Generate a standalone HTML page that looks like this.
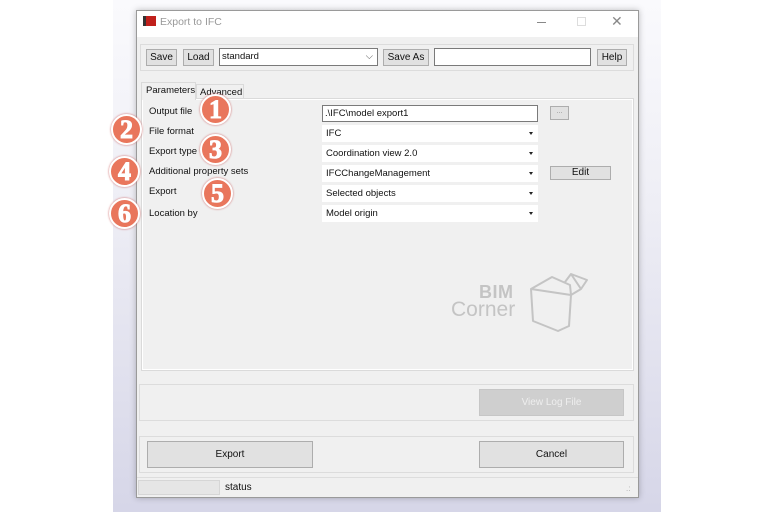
<!DOCTYPE html>
<html><head><meta charset="utf-8"><style>
*{box-sizing:border-box;margin:0;padding:0}
body{width:768px;height:512px;position:relative;overflow:hidden;background:#fff;font-family:"Liberation Sans",sans-serif;font-size:9.5px;color:#111}
.a{position:absolute}
.bg{left:113px;top:0;width:548px;height:512px;background:linear-gradient(#fafafd,#eeeef5 40%,#d6d6e8)}
.win{left:136px;top:10px;width:503px;height:488px;background:#f0f0f0;border:1px solid #9a9a9a;box-shadow:0 0 6px rgba(0,0,0,.25)}
.btn{position:absolute;background:#e1e1e1;border:1px solid #adadad;text-align:center;line-height:15px;font-size:10px}
.grp{position:absolute;border:1px solid #dcdcdc}
.lbl{position:absolute;left:149px;font-size:9.5px}
.dd{position:absolute;left:322px;width:216px;height:17px;background:#fff;font-size:9.5px;line-height:17px;padding-left:4px}
.dd:after{content:"";position:absolute;right:5px;top:7px;border-left:2.5px solid transparent;border-right:2.5px solid transparent;border-top:3px solid #222}
.c{position:absolute;width:31px;height:31px;border-radius:50%;background:#e9765c;border:2px solid #fff;box-shadow:0 0 2px #c66;color:#fff;font:900 26px/27px "Liberation Serif",serif;text-align:center;-webkit-text-stroke:1px #fff;text-shadow:0 0 1px #933}
</style></head><body>
<div class="a bg"></div>
<div class="a win"></div>
<div class="a" style="left:137px;top:11px;width:501px;height:26px;background:#fff"></div>
<div class="a" style="left:143px;top:16px;width:13px;height:10px;background:#c0201c;border-left:3px solid #333"></div>
<div class="a" style="left:160px;top:16px;color:#999;font-size:10.5px">Export to IFC</div>
<div class="a" style="left:537px;top:22px;width:9px;height:1px;background:#888"></div>
<div class="a" style="left:577px;top:17px;width:9px;height:9px;border:1px solid #ddd"></div>
<div class="a" style="left:611px;top:13px;color:#888;font-size:14px">✕</div>

<div class="grp" style="left:140px;top:44px;width:494px;height:27px"></div>
<div class="btn" style="left:146px;top:49px;width:31px;height:17px">Save</div>
<div class="btn" style="left:183px;top:49px;width:31px;height:17px">Load</div>
<div class="a" style="left:219px;top:48px;width:159px;height:18px;background:#fff;border:1px solid #7a7a7a;padding-left:2px;line-height:15px">standard<span style="position:absolute;right:4px;top:0;color:#666">⌵</span></div>
<div class="btn" style="left:383px;top:49px;width:46px;height:17px">Save As</div>
<div class="a" style="left:434px;top:48px;width:157px;height:18px;background:#fff;border:1px solid #7a7a7a"></div>
<div class="btn" style="left:597px;top:49px;width:30px;height:17px">Help</div>

<div class="a" style="left:141px;top:98px;width:493px;height:273px;border:1px solid #dadada;background:#f0f0f0"></div>
<div class="a" style="left:142px;top:99px;width:491px;height:271px;border:1px solid #fff"></div>
<div class="a" style="left:141px;top:82px;width:55px;height:18px;background:#f0f0f0;border:1px solid #dadada;border-bottom:none;padding:2px 0 0 4px">Parameters</div>
<div class="a" style="left:196px;top:84px;width:48px;height:15px;border:1px solid #dadada;border-bottom:none;padding:2px 0 0 3px">Advanced</div>

<div class="lbl" style="top:106px">Output file</div>
<div class="lbl" style="top:126px">File format</div>
<div class="lbl" style="top:146px">Export type</div>
<div class="lbl" style="top:166px">Additional property sets</div>
<div class="lbl" style="top:186px">Export</div>
<div class="lbl" style="top:208px">Location by</div>

<div class="a" style="left:322px;top:105px;width:216px;height:17px;background:#fff;border:1px solid #7a7a7a;line-height:15px;padding-left:2px">.\IFC\model export1</div>
<div class="btn" style="left:550px;top:106px;width:19px;height:14px;font-size:7px;line-height:10px;color:#888">...</div>
<div class="dd" style="top:125px">IFC</div>
<div class="dd" style="top:145px">Coordination view 2.0</div>
<div class="dd" style="top:165px">IFCChangeManagement</div>
<div class="dd" style="top:185px">Selected objects</div>
<div class="dd" style="top:205px">Model origin</div>
<div class="btn" style="left:550px;top:166px;width:61px;height:14px;line-height:12px">Edit</div>

<div class="c" style="left:200px;top:94px">1</div>
<div class="c" style="left:111px;top:114px">2</div>
<div class="c" style="left:200px;top:134px">3</div>
<div class="c" style="left:109px;top:156px">4</div>
<div class="c" style="left:202px;top:178px">5</div>
<div class="c" style="left:109px;top:198px">6</div>

<div class="a" style="left:479px;top:282px;color:#c4c4c4;font-weight:bold;font-size:18px;letter-spacing:0.5px">BIM</div>
<div class="a" style="left:451px;top:298px;color:#c4c4c4;font-size:21px">Corner</div>
<svg class="a" style="left:525px;top:270px" width="70" height="65" viewBox="0 0 70 65"><g fill="none" stroke="#c4c4c4" stroke-width="2" stroke-linejoin="round"><path d="M6 19 L27 7 L45 15 L46 25 Z M6 19 L8 51 L33 61 L44 56 L46 25 M40 12 L46 4 L62 10 L56 19 L46 25 M46 4 L56 19"/></g></svg>

<div class="grp" style="left:139px;top:384px;width:495px;height:37px"></div>
<div class="a" style="left:479px;top:389px;width:145px;height:27px;background:#cfcfcf;border:1px solid #c6c6c6;color:#eee;text-align:center;line-height:25px;font-size:10px">View Log File</div>
<div class="grp" style="left:139px;top:436px;width:495px;height:37px"></div>
<div class="btn" style="left:147px;top:441px;width:166px;height:27px;line-height:25px">Export</div>
<div class="btn" style="left:479px;top:441px;width:145px;height:27px;line-height:25px">Cancel</div>
<div class="a" style="left:137px;top:477px;width:501px;height:1px;background:#ddd"></div>
<div class="a" style="left:138px;top:480px;width:82px;height:15px;background:#e6e6e6;border:1px solid #d6d6d6"></div>
<div class="a" style="left:225px;top:482px;font-size:10px">status</div>
<div class="a" style="left:626px;top:484px;color:#aaa;font-size:8px">.:</div>
</body></html>
